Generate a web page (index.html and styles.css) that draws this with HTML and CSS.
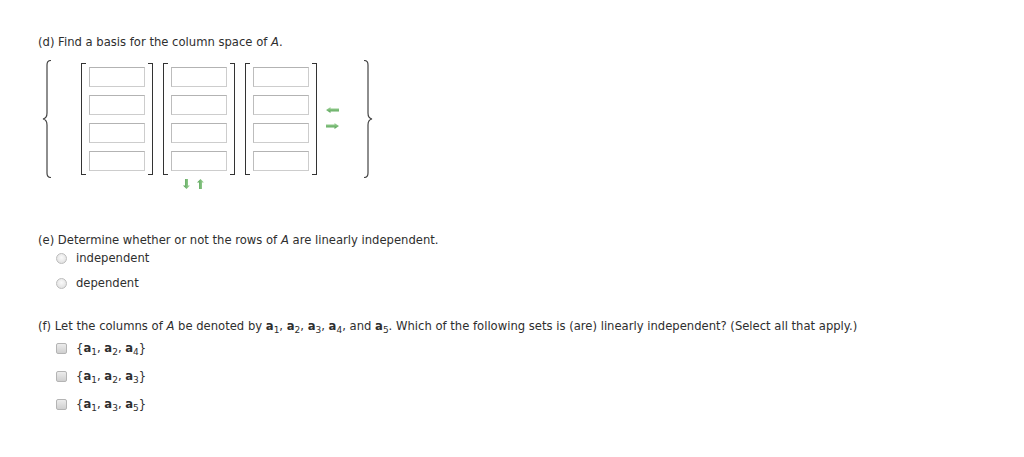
FILE: index.html
```html
<!DOCTYPE html>
<html>
<head>
<meta charset="utf-8">
<link rel="stylesheet" href="styles.css">
</head>
<body>
<div class="page">
  <section class="part part-d">
    <p class="q">(d) Find a basis for the column space of <i>A</i>.</p>
    <div class="set">
      <svg class="brace" width="10" height="118" viewBox="0 0 10 118"><path d="M9 0.5 C6 0.5 5 2 5 5 L5 53 C5 56.5 3.5 58.5 1 59 C3.5 59.5 5 61.5 5 65 L5 113 C5 116 6 117.5 9 117.5" fill="none" stroke="#444" stroke-width="1.2"/></svg>
      <div class="vectors">
        <div class="vec"><span class="box"></span><span class="box"></span><span class="box"></span><span class="box"></span></div>
        <div class="vec"><span class="box"></span><span class="box"></span><span class="box"></span><span class="box"></span></div>
        <div class="vec"><span class="box"></span><span class="box"></span><span class="box"></span><span class="box"></span></div>
      </div>
      <div class="h-arrows">
        <svg width="13" height="6" viewBox="0 0 13 6"><defs><linearGradient id="g1" x1="0" y1="0" x2="0" y2="1"><stop offset="0" stop-color="#a6d8a0"/><stop offset="1" stop-color="#4f9e4f"/></linearGradient></defs><path d="M0 3 L4.5 0 L4.5 1.5 L13 1.5 L13 4.5 L4.5 4.5 L4.5 6 Z" fill="url(#g1)"/></svg>
        <svg width="13" height="6" viewBox="0 0 13 6"><defs><linearGradient id="g2" x1="0" y1="0" x2="0" y2="1"><stop offset="0" stop-color="#a6d8a0"/><stop offset="1" stop-color="#4f9e4f"/></linearGradient></defs><path d="M13 3 L8.5 0 L8.5 1.5 L0 1.5 L0 4.5 L8.5 4.5 L8.5 6 Z" fill="url(#g2)"/></svg>
      </div>
      <svg class="brace brace-r" width="10" height="118" viewBox="0 0 10 118"><path d="M1 0.5 C4 0.5 5 2 5 5 L5 53 C5 56.5 6.5 58.5 9 59 C6.5 59.5 5 61.5 5 65 L5 113 C5 116 4 117.5 1 117.5" fill="none" stroke="#444" stroke-width="1.2"/></svg>
    </div>
    <div class="v-arrows">
      <svg width="7" height="10" viewBox="0 0 7 10"><defs><linearGradient id="g3" x1="0" y1="0" x2="1" y2="0"><stop offset="0" stop-color="#4f9e4f"/><stop offset="1" stop-color="#a6d8a0"/></linearGradient></defs><path d="M2 0 L5 0 L5 6.5 L7 6.5 L3.5 10 L0 6.5 L2 6.5 Z" fill="url(#g3)"/></svg>
      <svg width="7" height="10" viewBox="0 0 7 10"><defs><linearGradient id="g4" x1="0" y1="0" x2="1" y2="0"><stop offset="0" stop-color="#4f9e4f"/><stop offset="1" stop-color="#a6d8a0"/></linearGradient></defs><path d="M2 10 L5 10 L5 3.5 L7 3.5 L3.5 0 L0 3.5 L2 3.5 Z" fill="url(#g4)"/></svg>
    </div>
  </section>

  <section class="part part-e">
    <p class="q">(e) Determine whether or not the rows of <i>A</i> are linearly independent.</p>
    <div class="options radios">
      <label class="opt"><span class="radio"></span><span class="lbl">independent</span></label>
      <label class="opt"><span class="radio"></span><span class="lbl">dependent</span></label>
    </div>
  </section>

  <section class="part part-f">
    <p class="q">(f) Let the columns of <i>A</i> be denoted by <b>a</b><sub>1</sub>, <b>a</b><sub>2</sub>, <b>a</b><sub>3</sub>, <b>a</b><sub>4</sub>, and <b>a</b><sub>5</sub>. Which of the following sets is (are) linearly independent? (Select all that apply.)</p>
    <div class="options checks">
      <label class="opt"><span class="check"></span><span class="lbl">{<b>a</b><sub>1</sub>, <b>a</b><sub>2</sub>, <b>a</b><sub>4</sub>}</span></label>
      <label class="opt"><span class="check"></span><span class="lbl">{<b>a</b><sub>1</sub>, <b>a</b><sub>2</sub>, <b>a</b><sub>3</sub>}</span></label>
      <label class="opt"><span class="check"></span><span class="lbl">{<b>a</b><sub>1</sub>, <b>a</b><sub>3</sub>, <b>a</b><sub>5</sub>}</span></label>
    </div>
  </section>
</div>
</body>
</html>
```

FILE: styles.css
```css
html, body {
  margin: 0;
  padding: 0;
  background: #fff;
}
body {
  font-family: "DejaVu Sans", Verdana, sans-serif;
  font-size: 11.6px;
  color: #2e2e2e;
}
.page {
  padding: 35px 0 0 38px;
}
.q {
  margin: 0;
  line-height: 14px;
  white-space: nowrap;
}
.set {
  display: flex;
  align-items: center;
  margin: 11px 0 0 4px;
  height: 118px;
}
.brace {
  display: block;
  flex: none;
}
.vectors {
  display: flex;
  gap: 10px;
  margin-left: 29px;
}
.vec {
  display: flex;
  flex-direction: column;
  gap: 8px;
  padding: 4px 7px;
  border-left: 1px solid #333;
  border-right: 1px solid #333;
  background:
    linear-gradient(#333, #333) left top / 4px 1px no-repeat,
    linear-gradient(#333, #333) left bottom / 4px 1px no-repeat,
    linear-gradient(#333, #333) right top / 4px 1px no-repeat,
    linear-gradient(#333, #333) right bottom / 4px 1px no-repeat;
}
.box {
  display: block;
  width: 56px;
  height: 20px;
  box-sizing: border-box;
  border: 1px solid #cdcdcd;
  border-top-color: #b3b3b3;
  border-left-color: #bdbdbd;
  background: #fff;
}
.h-arrows {
  display: flex;
  flex-direction: column;
  gap: 10px;
  margin-left: 9px;
  margin-top: -3px;
}
.h-arrows svg, .v-arrows svg {
  display: block;
}
.brace-r {
  margin-left: 24px;
}
.v-arrows {
  display: flex;
  gap: 7px;
  margin: 1px 0 0 145px;
}
.part-e {
  margin-top: 44px;
}
.options {
  display: flex;
  flex-direction: column;
  padding-left: 18px;
}
.radios {
  margin-top: 4px;
  gap: 11px;
}
.opt {
  display: flex;
  align-items: center;
  line-height: 14px;
  height: 14px;
  white-space: nowrap;
}
.lbl {
  display: block;
}
.radio {
  width: 11px;
  height: 11px;
  box-sizing: border-box;
  border-radius: 50%;
  border: 1px solid #bcbcbc;
  background: radial-gradient(circle at 50% 40%, #fafafa 0%, #e4e4e4 70%, #d6d6d6 100%);
  margin-right: 9px;
  flex: none;
}
.part-f {
  margin-top: 29px;
}
.checks {
  margin-top: 8px;
  gap: 14px;
}
.check {
  width: 11px;
  height: 11px;
  box-sizing: border-box;
  border-radius: 2px;
  border: 1px solid #b4b4b4;
  background: linear-gradient(#ececec, #cfcfcf);
  margin-right: 9px;
  flex: none;
}
sub {
  font-size: 9px;
  vertical-align: -3px;
  line-height: 0;
}
b {
  font-weight: bold;
}
```
